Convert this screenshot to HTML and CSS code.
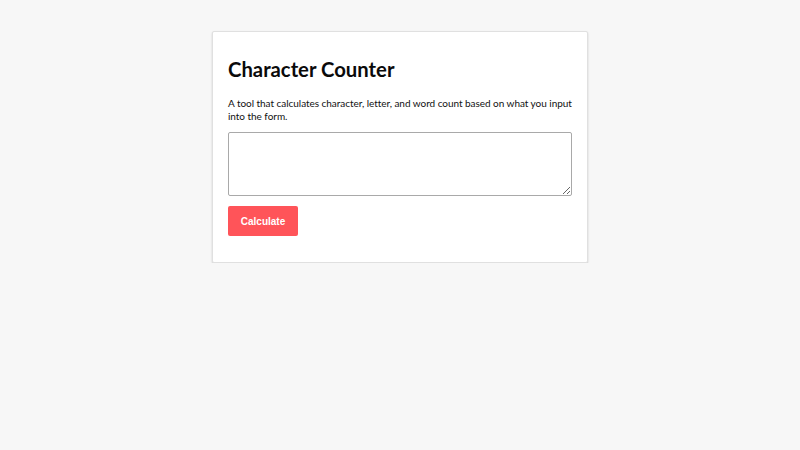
FILE: index.html
```html
<!DOCTYPE html>
<html lang="en">
<head>
<meta charset="utf-8">
<title>Character Counter</title>
<link rel="stylesheet" href="styles.css">
</head>
<body>
<main class="card">
  <h1 class="title">Character Counter</h1>
  <p class="desc">A tool that calculates character, letter, and word count based on what you input into the form.</p>
  <textarea class="input"></textarea>
  <button class="btn" type="button">Calculate</button>
</main>
</body>
</html>
```

FILE: styles.css
```css
html, body {
  margin: 0;
  padding: 0;
}
body {
  background: #f7f7f7;
  font-family: Lato, "Liberation Sans", sans-serif;
  color: #111;
  padding-top: 31px;
}
.card {
  box-sizing: border-box;
  width: 376px;
  margin: 0 auto;
  background: #fff;
  border: 1px solid #e0e0e0;
  border-radius: 2px;
  box-shadow: 0 1px 2px rgba(0,0,0,0.18);
  padding: 22px 15px 26px;
  display: flex;
  flex-direction: column;
  align-items: flex-start;
}
.title {
  margin: 0;
  font-size: 20.3px;
  font-weight: 700;
  line-height: 30px;
  color: #0a0a0a;
}
.desc {
  margin: 13px 0 9px;
  font-size: 10px;
  line-height: 13px;
  letter-spacing: -0.04px;
}
.input {
  box-sizing: border-box;
  width: 344px;
  height: 64px;
  margin: 0;
  border: 1px solid #a9a9a9;
  border-radius: 2px;
  resize: vertical;
}
.btn {
  margin-top: 10px;
  width: 70px;
  height: 30px;
  border: none;
  border-radius: 2px;
  background: #ff5459;
  color: #fff;
  font-family: "Liberation Sans", Arial, sans-serif;
  font-weight: 700;
  font-size: 10px;
  padding: 0;
}
```
